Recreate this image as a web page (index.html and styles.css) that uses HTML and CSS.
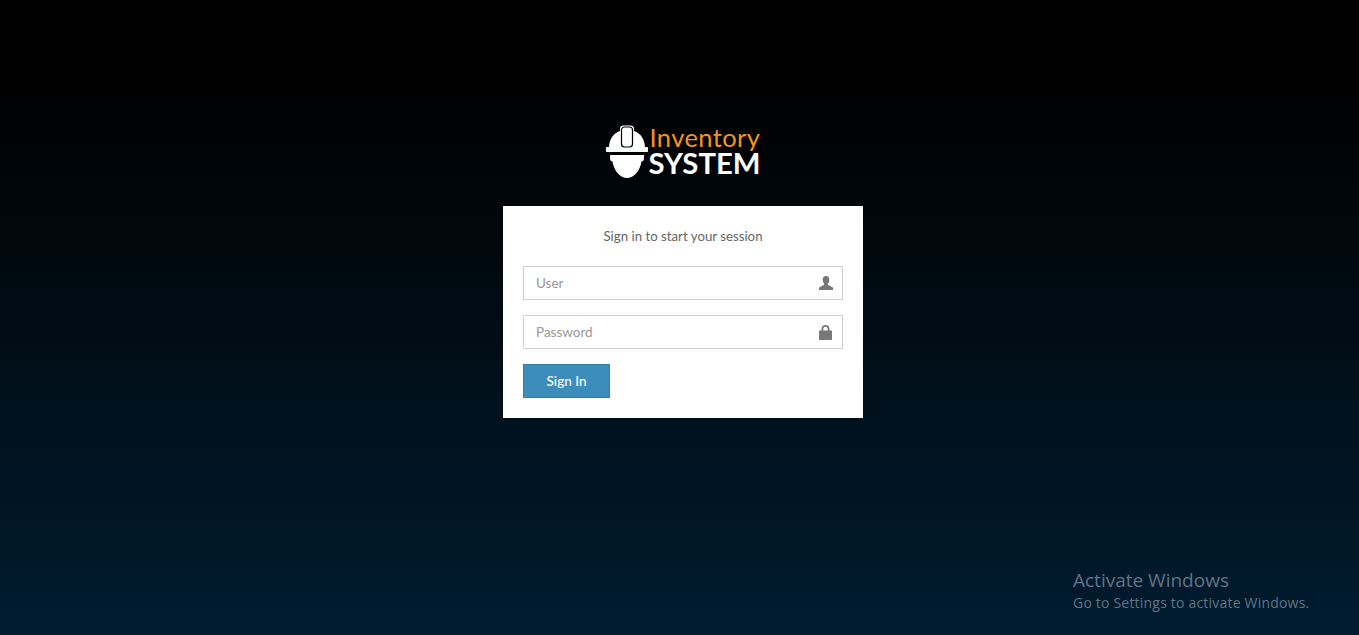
FILE: index.html
```html
<!DOCTYPE html>
<html lang="en">
<head>
<meta charset="utf-8">
<title>Inventory System</title>
<link rel="stylesheet" href="styles.css">
</head>
<body>
<main class="login">
  <div class="logo">
    <svg class="logo-icon" width="42" height="54" viewBox="0 0 42 54" aria-hidden="true">
      <path fill="#fff" d="M14 6C7 8.500 3.500 14 3 22H1C0.400 22 0 22.500 0 23V26C0 26.600 0.400 27 1 27H41C41.600 27 42 26.600 42 26V23C42 22.500 41.600 22 41 22H39C38.500 14 35 8.500 28 6V3.500C28 1.500 26.500 0.500 24.500 0.500H17.500C15.500 0.500 14 1.500 14 3.500Z"/>
      <rect x="15.500" y="2" width="11" height="20" rx="3" fill="none" stroke="#000" stroke-width="1.200"/>
      <path fill="#fff" d="M4 30H38V33C38 35.500 37 36.500 35.500 36.500C34 46 28 53 21 53C14 53 8 46 6.500 36.500C5 36.500 4 35.500 4 33Z"/>
    </svg>
    <div class="logo-text">
      <span class="logo-top">Inventory</span>
      <span class="logo-bottom">SYSTEM</span>
    </div>
  </div>
  <form class="card">
    <p class="card-title">Sign in to start your session</p>
    <div class="field">
      <span class="placeholder">User</span>
      <svg class="field-icon" width="14" height="14" viewBox="0 0 14 14" aria-hidden="true">
        <path fill="#777" d="M7 0C9.200 0 10.300 1.700 10.300 3.700C10.300 5.400 9.700 6.700 8.900 7.600V8.800L14 11.500V14H0V11.500L5.100 8.800V7.600C4.300 6.700 3.700 5.400 3.700 3.700C3.700 1.700 4.800 0 7 0Z"/>
      </svg>
    </div>
    <div class="field">
      <span class="placeholder">Password</span>
      <svg class="field-icon field-icon-lock" width="13" height="15" viewBox="0 0 13 15" aria-hidden="true">
        <path fill="#777" d="M2.500 5.500V4C2.500 1.500 4 0 6.500 0C9 0 10.500 1.500 10.500 4V5.500H12C12.600 5.500 13 5.900 13 6.500V14C13 14.600 12.600 15 12 15H1C0.400 15 0 14.600 0 14V6.500C0 5.900 0.400 5.500 1 5.500ZM4.300 5.500H8.700V4C8.700 2.600 7.800 1.800 6.500 1.800C5.200 1.800 4.300 2.600 4.300 4Z"/>
      </svg>
    </div>
    <button class="signin" type="button">Sign In</button>
  </form>
</main>
<aside class="watermark">
  <div class="wm-title">Activate Windows</div>
  <div class="wm-sub">Go to Settings to activate Windows.</div>
</aside>
</body>
</html>
```
FILE: styles.css
```css
* { box-sizing: border-box; }
html, body { margin: 0; height: 100%; }
body {
  height: 635px;
  overflow: hidden;
  background: linear-gradient(to bottom, #000 12%, #001c30 100%);
  font-family: "Lato", "Noto Sans", sans-serif;
  position: relative;
}
.login {
  width: 360px;
  margin-left: 503px;
  padding-top: 125px;
}
.logo {
  display: flex;
  justify-content: center;
  align-items: flex-start;
  gap: 1px;
  height: 81px;
}
.logo-icon { flex: none; }
.logo-text { display: flex; flex-direction: column; }
.logo-top {
  color: #f7931e;
  font-family: "Lato", sans-serif;
  font-size: 25.500px;
  line-height: 25px;
  letter-spacing: 0.4px;
  margin-left: 1px;
}
.logo-bottom {
  color: #fff;
  font-family: "Lato", sans-serif;
  font-weight: 700;
  font-size: 29.300px;
  line-height: 25px;
}
.card {
  background: #fff;
  height: 212px;
  padding: 20px;
}
.card-title {
  margin: 0 0 20px;
  height: 20px;
  text-align: center;
  color: #666;
  font-size: 13.250px;
  line-height: 20px;
}
.field {
  height: 34px;
  margin-bottom: 15px;
  border: 1px solid #d0d0d0;
  padding: 0 9px 0 12px;
  display: flex;
  align-items: center;
  justify-content: space-between;
}
.placeholder {
  color: #999;
  font-size: 13.500px;
}
.field-icon { flex: none; }
.field-icon-lock { margin-right: 1px; }
.signin {
  display: block;
  width: 87px;
  height: 34px;
  padding: 0 0 1px;
  background: #3c8dbc;
  border: 1px solid #367fa9;
  color: #fff;
  font-family: inherit;
  font-weight: 500;
  font-size: 13.500px;
}
.watermark {
  position: absolute;
  left: 1073px;
  top: 567px;
  color: #5f7485;
  font-family: "Open Sans", sans-serif;
}
.wm-title { font-size: 19px; line-height: 26px; }
.wm-sub { font-size: 14px; line-height: 20px; letter-spacing: 0.2px; }
```
